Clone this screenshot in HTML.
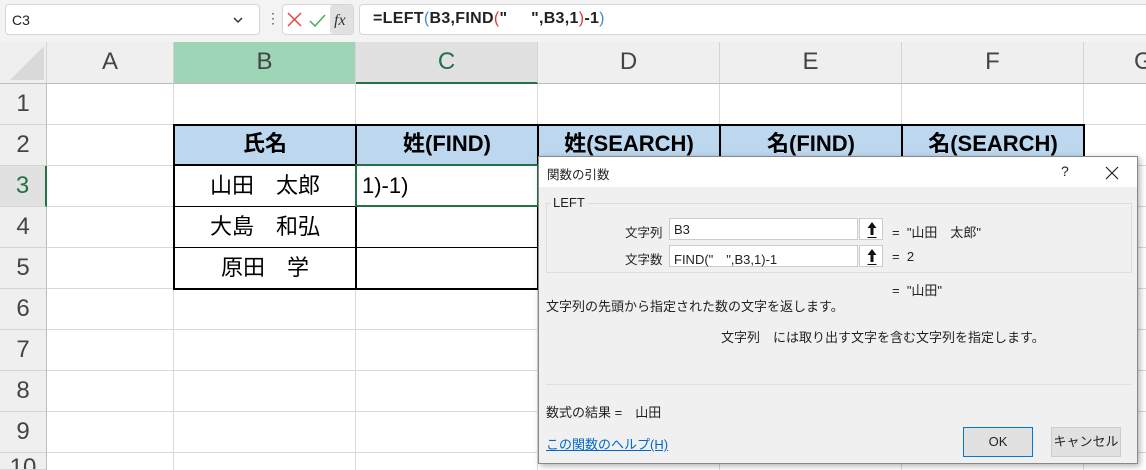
<!DOCTYPE html>
<html><head><meta charset="utf-8"><style>
*{box-sizing:border-box;margin:0;padding:0}
html,body{width:1146px;height:470px;overflow:hidden}
body{background:#fff;font-family:"Liberation Sans","Noto Sans CJK JP",sans-serif;position:relative}
.a{position:absolute}
.top{left:0;top:0;width:1146px;height:42px;background:#f3f3f3}
.box{background:#fff;border:1px solid #d6d6d6;border-radius:4px}
.colh{top:42px;height:42px;background:#efefef;border-bottom:1px solid #bdbdbd;border-right:1px solid #d4d4d4;font-size:24px;color:#444;text-align:center;line-height:40px}
.rowh{left:0;width:47px;background:#efefef;border-right:1px solid #bdbdbd;border-bottom:1px solid #d4d4d4;font-size:24px;color:#444;text-align:center;line-height:40px}
.vl{top:84px;width:1px;height:386px;background:#d9d9d9}
.hl{left:47px;width:1099px;height:1px;background:#d9d9d9}
.c{font-size:22px;text-align:center;line-height:40px;color:#000}
.hd{font-weight:bold}
.dlg{font-size:12.5px;color:#222}
.inp{background:#fff;border:1px solid #ccc;padding:3px 4px;width:189px;height:22px;font-size:13px}
.arr{background:#fff;border:1px solid #ccc;width:24px;height:22px}
</style></head><body>
<div class="a top"></div>
<div class="a box" style="left:5px;top:4px;width:255px;height:31px"></div>
<div class="a" style="left:12px;top:12px;font-size:14px;color:#222">C3</div>
<svg class="a" style="left:233px;top:16px" width="10" height="8"><path d="M1 2L5 6L9 2" stroke="#333" stroke-width="1.5" fill="none"/></svg>
<div class="a" style="left:266px;top:10px;font-size:14px;color:#555">⋮</div>
<div class="a box" style="left:282px;top:4px;width:72px;height:31px"></div>
<div class="a" style="left:330px;top:5px;width:23px;height:29px;background:#e1e1e1;border-radius:3px"></div>
<svg class="a" style="left:287px;top:12px" width="66" height="16"><path d="M1 1L14 14M14 1L1 14" stroke="#e04848" stroke-width="1.5"/><path d="M23 9L28 14L38 3" stroke="#4caa5c" stroke-width="1.5" fill="none"/><text x="47" y="13" font-family="Liberation Serif" font-style="italic" font-size="16" fill="#333">fx</text></svg>
<div class="a box" style="left:359px;top:4px;width:800px;height:31px"></div>
<div class="a" style="left:373px;top:10px;font-size:16px;font-weight:bold;color:#222;letter-spacing:0.3px">=LEFT<span style="color:#3a8ed9;font-weight:normal">(</span>B3,FIND<span style="color:#d83a3a;font-weight:normal">(</span>"&nbsp;&nbsp;&nbsp;&nbsp;&nbsp;",B3,1<span style="color:#d83a3a;font-weight:normal">)</span>-1<span style="color:#3a8ed9;font-weight:normal">)</span></div>

<div class="a colh" style="left:0;width:47px"></div>
<svg class="a" style="left:8px;top:46px" width="36" height="36"><path d="M36 0L36 34L2 34Z" fill="#d9d9d9"/></svg>
<div class="a colh" style="left:47px;width:127px">A</div>
<div class="a colh" style="left:174px;width:182px;background:#9fd5b7">B</div>
<div class="a colh" style="left:356px;width:182px;background:#e1e1e1;border-bottom:2px solid #217346;color:#217346">C</div>
<div class="a colh" style="left:538px;width:182px">D</div>
<div class="a colh" style="left:720px;width:182px">E</div>
<div class="a colh" style="left:902px;width:182px">F</div>
<div class="a colh" style="left:1084px;width:80px;text-align:left;padding-left:50px">G</div>

<div class="a vl" style="left:173px"></div><div class="a vl" style="left:355px"></div><div class="a vl" style="left:537px"></div><div class="a vl" style="left:719px"></div><div class="a vl" style="left:901px"></div><div class="a vl" style="left:1083px"></div>
<div class="a hl" style="top:124px"></div><div class="a hl" style="top:165px"></div><div class="a hl" style="top:206px"></div><div class="a hl" style="top:247px"></div><div class="a hl" style="top:288px"></div><div class="a hl" style="top:329px"></div><div class="a hl" style="top:370px"></div><div class="a hl" style="top:411px"></div><div class="a hl" style="top:452px"></div>

<div class="a rowh" style="top:84px;height:41px">1</div>
<div class="a rowh" style="top:125px;height:41px">2</div>
<div class="a rowh" style="top:166px;height:41px;background:#e1e1e1;color:#217346;border-right:2px solid #217346">3</div>
<div class="a rowh" style="top:207px;height:41px">4</div>
<div class="a rowh" style="top:248px;height:41px">5</div>
<div class="a rowh" style="top:289px;height:41px">6</div>
<div class="a rowh" style="top:330px;height:41px">7</div>
<div class="a rowh" style="top:371px;height:41px">8</div>
<div class="a rowh" style="top:412px;height:41px">9</div>
<div class="a rowh" style="top:453px;height:17px;line-height:30px;overflow:hidden">10</div>

<div class="a" style="left:173px;top:124px;width:912px;height:42px;background:#bdd7ee;border:2px solid #000"></div>
<div class="a" style="left:173px;top:124px;width:184px;height:166px;border:2px solid #000"></div>
<div class="a" style="left:355px;top:124px;width:184px;height:166px;border:2px solid #000;border-left:none"></div>
<div class="a" style="left:175px;top:206px;width:362px;height:1px;background:#000"></div>
<div class="a" style="left:175px;top:247px;width:362px;height:1px;background:#000"></div>
<div class="a" style="left:719px;top:126px;width:2px;height:40px;background:#000"></div>
<div class="a" style="left:901px;top:126px;width:2px;height:40px;background:#000"></div>
<div class="a c hd" style="left:175px;top:124px;width:180px">氏名</div>
<div class="a c hd" style="left:357px;top:124px;width:180px">姓(FIND)</div>
<div class="a c hd" style="left:539px;top:124px;width:180px">姓(SEARCH)</div>
<div class="a c hd" style="left:721px;top:124px;width:180px">名(FIND)</div>
<div class="a c hd" style="left:903px;top:124px;width:180px">名(SEARCH)</div>
<div class="a c" style="left:175px;top:166px;width:180px">山田　太郎</div>
<div class="a c" style="left:175px;top:207px;width:180px">大島　和弘</div>
<div class="a c" style="left:175px;top:248px;width:180px">原田　学</div>
<div class="a" style="left:355px;top:164px;width:184px;height:43px;border:2px solid #217346"></div>
<div class="a" style="left:362px;top:166px;font-size:22px;line-height:40px">1)-1)</div>

<div class="a dlg" style="left:538px;top:156px;width:600px;height:308px;background:#f0f0f0;border:1px solid #888;box-shadow:2px 2px 6px rgba(0,0,0,.3)">
 <div class="a" style="left:0;top:0;width:598px;height:30px;background:#fff"></div>
 <div class="a" style="left:8px;top:7px">関数の引数</div>
 <div class="a" style="left:522px;top:6px;font-size:14px">?</div>
 <svg class="a" style="left:566px;top:9px" width="14" height="14"><path d="M1 1L13 13M13 1L1 13" stroke="#222" stroke-width="1.2"/></svg>
 <div class="a" style="left:7px;top:46px;width:586px;height:70px;border:1px solid #ddd"></div>
 <div class="a" style="left:12px;top:38px;background:#f0f0f0;padding:0 2px;font-size:13px">LEFT</div>
 <div class="a" style="left:86px;top:65px">文字列</div>
 <div class="a" style="left:86px;top:92px">文字数</div>
 <div class="a inp" style="left:130px;top:61px">B3</div>
 <div class="a inp" style="left:130px;top:88px">FIND("　",B3,1)-1</div>
 <svg class="a arr" style="left:320px;top:61px" width="24" height="22"><path d="M12 3L7.5 9H10.5V16H13.5V9H16.5Z" fill="#111"/><path d="M7.5 18.5H16.5" stroke="#111"/></svg>
 <svg class="a arr" style="left:320px;top:88px" width="24" height="22"><path d="M12 3L7.5 9H10.5V16H13.5V9H16.5Z" fill="#111"/><path d="M7.5 18.5H16.5" stroke="#111"/></svg>
 <div class="a" style="left:353px;top:65px;font-size:13px">=&nbsp;&nbsp;"山田　太郎"</div>
 <div class="a" style="left:353px;top:92px;font-size:13px">=&nbsp;&nbsp;2</div>
 <div class="a" style="left:353px;top:123px;font-size:13px">=&nbsp;&nbsp;"山田"</div>
 <div class="a" style="left:7px;top:139px;font-size:13px">文字列の先頭から指定された数の文字を返します。</div>
 <div class="a" style="left:182px;top:170px;font-size:13px">文字列　には取り出す文字を含む文字列を指定します。</div>
 <div class="a" style="left:7px;top:227px;width:585px;height:1px;background:#e0e0e0"></div>
 <div class="a" style="left:7px;top:245px;font-size:13px">数式の結果 =　山田</div>
 <div class="a" style="left:7px;top:277px;color:#0066cc;text-decoration:underline;font-size:13px">この関数のヘルプ(H)</div>
 <div class="a" style="left:424px;top:270px;width:70px;height:30px;background:#e1e1e1;border:1px solid #0078d7;text-align:center;line-height:28px;font-size:13px">OK</div>
 <div class="a" style="left:512px;top:270px;width:70px;height:30px;background:#e1e1e1;border:1px solid #ccc;text-align:center;line-height:28px;font-size:13px">キャンセル</div>
</div>
</body></html>
